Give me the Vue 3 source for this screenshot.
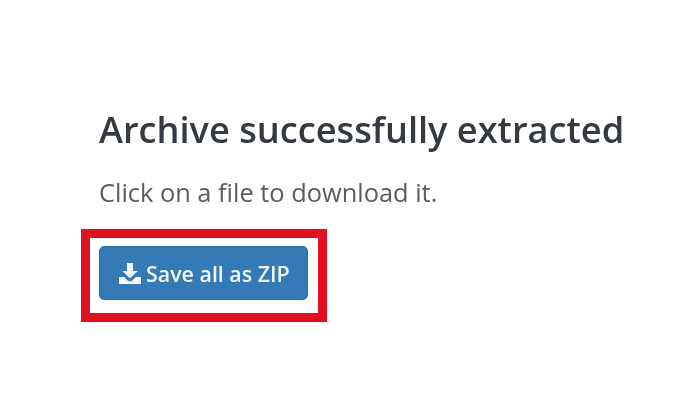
<script setup>
const title = 'Archive successfully extracted'
const hint = 'Click on a file to download it.'
</script>

<template>
  <div class="page">
    <h1 class="title">{{ title }}</h1>
    <p class="hint">{{ hint }}</p>
    <div class="highlight">
      <button class="save-btn" type="button">
        <svg class="icon" viewBox="0 0 22 21" width="22" height="21">
          <path d="M8 0h6v8h4.6L11 15.6 3.4 8H8z" fill="#f2f6fa" />
          <path d="M0 14h5.2l3.4 3.4c1.3 1.2 3.5 1.2 4.8 0l3.4-3.4H22v7H0z" fill="#f2f6fa" />
        </svg>
        <span>Save all as ZIP</span>
      </button>
    </div>
  </div>
</template>

<style>
html, body {
  margin: 0;
  background: #fff;
}
</style>

<style scoped>
.page {
  width: 696px;
  height: 405px;
  box-sizing: border-box;
  padding: 107px 0 0 99px;
  font-family: "Open Sans", "Noto Sans", sans-serif;
  overflow: hidden;
  filter: blur(0.4px);
}

.title {
  margin: 0;
  font-size: 36.2px;
  line-height: 44px;
  font-weight: 600;
  color: #353a40;
  white-space: nowrap;
}

.hint {
  margin: 25px 0 0;
  font-size: 25.4px;
  line-height: 32px;
  color: #5a5d60;
  white-space: nowrap;
}

.highlight {
  margin: 21px 0 0 -18px;
  padding: 8px 9px 13px;
  border: 9px solid #e0101f;
  width: 246px;
  height: 93px;
  box-sizing: border-box;
}

.save-btn {
  display: flex;
  align-items: center;
  gap: 5px;
  width: 209px;
  height: 54px;
  margin: 0;
  padding: 0 0 0 19px;
  box-sizing: border-box;
  background: #337ab7;
  border: 1px solid #2e6da4;
  border-radius: 5px;
  color: #f2f6fa;
  font-family: inherit;
  font-size: 21.4px;
  font-weight: 600;
  white-space: nowrap;
}

.icon {
  flex: none;
}
</style>
